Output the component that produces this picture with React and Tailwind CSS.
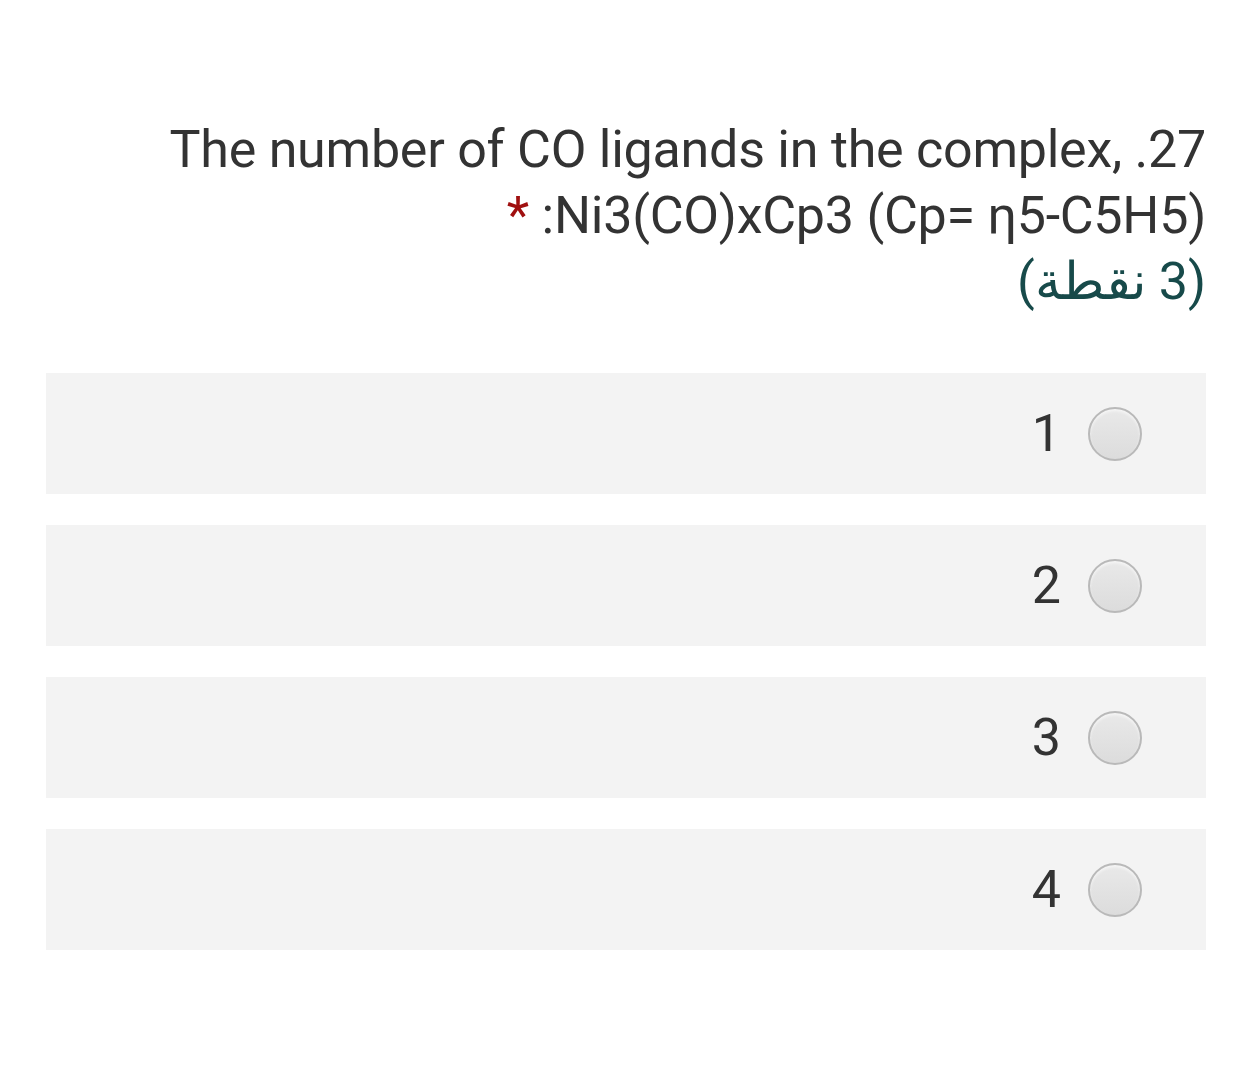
import React from "react";

function Radio() {
  return (
    <div className="w-[54px] h-[54px] rounded-full border-2 border-[#b9b9b9] bg-gradient-to-b from-[#e9e9e9] to-[#dcdcdc] shadow-[inset_0_2px_3px_rgba(255,255,255,0.6)]" />
  );
}

export default function App() {
  const opts = ["1", "2", "3", "4"];
  return (
    <div className="w-[1250px] h-[1080px] bg-white font-['Roboto','Noto_Sans',sans-serif]">
      <div className="pt-[117px] pr-[44px] text-right text-[#333333] text-[52px] leading-[66px] tracking-[-0.25px]">
        <div>The number of CO ligands in the complex, .27</div>
        <div>
          <span className="text-[#a01010]">*</span> :Ni3(CO)xCp3 (Cp= η5-C5H5)
        </div>
        <div dir="rtl" className="text-right text-[#174a4a] tracking-[-1px]">(3 نقطة)</div>
      </div>
      <div className="mt-[58px] ml-[46px] w-[1160px] flex flex-col gap-[31px]">
        {opts.map((o) => (
          <div key={o} className="h-[121px] bg-[#f3f3f3] flex items-center justify-end pr-[64px] gap-[27px]">
            <span className="text-[52px] leading-none text-[#333333]">{o}</span>
            <Radio />
          </div>
        ))}
      </div>
    </div>
  );
}
